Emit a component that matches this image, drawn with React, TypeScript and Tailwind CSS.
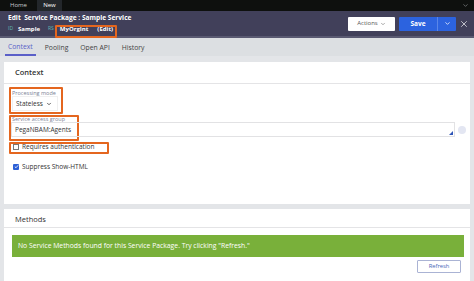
import { ChevronDown, X } from 'lucide-react';

const font = { fontFamily: '"Open Sans", "Liberation Sans", sans-serif' };

function OrangeBox({ className }: { className: string }) {
  return <div className={`absolute border-2 border-[#e4661f] rounded-[1px] pointer-events-none ${className}`} />;
}

export default function App() {
  return (
    <div style={font} className="w-[474px] h-[281px] overflow-hidden bg-[#e3e5e8] flex flex-col">
      {/* top tab strip */}
      <div className="h-[11px] bg-[#0e100e] flex items-stretch text-[6px] text-[#c9cacc] relative">
        <div className="w-[37px] flex items-center justify-center">Home</div>
        <div className="w-[25px] bg-[#23272b] flex items-center justify-center text-white">New</div>
        <ChevronDown className="absolute right-[5px] top-[2px] w-[7px] h-[7px] text-[#9a9ca0]" strokeWidth={2} />
      </div>

      {/* header */}
      <div className="h-[25px] bg-[#41405a] flex items-center justify-between pl-[8px] pr-[5px] relative">
        <div className="flex flex-col leading-none">
          <div className="text-white font-bold text-[6.6px]">Edit&nbsp; Service Package : Sample Service</div>
          <div className="flex items-center text-[6px] mt-[4px] font-bold">
            <span className="text-[#5fb6b0] font-normal text-[5px]">ID</span>
            <span className="text-white ml-[5px]">Sample</span>
            <span className="text-[#5fb6b0] font-normal text-[5px] ml-[8px]">RS</span>
            <span className="text-white ml-[6px]">MyOrgInt</span>
            <span className="text-white ml-[9px]">(Edit)</span>
          </div>
        </div>
        <OrangeBox className="left-[55px] top-[14px] w-[62px] h-[13px]" />
        <div className="flex items-center">
          <button className="h-[14px] w-[47px] bg-white rounded-[1px] flex items-center justify-center gap-[2px] text-[6px] text-[#555]">
            Actions <ChevronDown className="w-[6px] h-[6px]" strokeWidth={2} />
          </button>
          <div className="ml-[4px] h-[14px] flex bg-[#2c63df] rounded-[1px]">
            <div className="w-[38px] flex items-center justify-center text-white font-bold text-[6.5px]">Save</div>
            <div className="w-[19px] border-l border-[#5a86e8] flex items-center justify-center">
              <ChevronDown className="w-[7px] h-[7px] text-white" strokeWidth={2.5} />
            </div>
          </div>
          <X className="ml-[3px] w-[10px] h-[10px] text-[#d8d8de]" strokeWidth={2} />
        </div>
      </div>
      <div className="h-[2px] bg-[#5a5a72]" />

      {/* tabs */}
      <div className="h-[18px] bg-[#dcdfe2] flex items-stretch text-[6.8px] text-[#444] pl-[5px]">
        <div className="px-[3px] flex items-center text-[#5a5fc8] border-b-2 border-[#5a5fc8] pt-[2px]">Context</div>
        <div className="ml-[9px] flex items-center pt-[2px]">Pooling</div>
        <div className="ml-[12px] flex items-center pt-[2px]">Open API</div>
        <div className="ml-[12px] flex items-center pt-[2px]">History</div>
      </div>

      {/* body */}
      <div className="flex-1 pt-[6px] px-[4px] flex flex-col gap-[5px]">
        {/* context card */}
        <div className="bg-white h-[142px] flex flex-col">
          <div className="h-[22px] border-b border-[#e4e4e6] flex items-center pl-[11px] text-[7.5px] font-semibold text-[#333]">
            Context
          </div>
          <div className="relative flex-1 pl-[8px] pt-[5px] text-[#333]">
            <OrangeBox className="left-[5px] top-[3px] w-[54px] h-[27px]" />
            <OrangeBox className="left-[5px] top-[31px] w-[70px] h-[26px]" />
            <OrangeBox className="left-[5px] top-[58px] w-[100px] h-[12px]" />

            <div className="text-[5.5px] leading-[8px] text-[#7b7f95]">Processing mode</div>
            <div className="mt-[-1px] w-[46px] h-[15px] border border-[#f0f0f0] flex items-center pl-[3px] text-[6.5px] gap-[3px]">
              Stateless <ChevronDown className="w-[6px] h-[6px]" strokeWidth={3} />
            </div>

            <div className="mt-[4px] text-[5.5px] leading-[8px] text-[#7b7f95]">Service access group</div>
            <div className="flex items-center mt-[-1px]">
              <div className="relative w-[444px] -ml-[1px] h-[15px] border border-[#e2e2e4] flex items-center pl-[3px] text-[6.5px]">
                PegaNBAM:Agents
                <div className="absolute right-[1px] bottom-[1px] w-0 h-0 border-l-[4px] border-l-transparent border-b-[4px] border-b-[#2f55b8]" />
              </div>
              <div className="ml-[3px] w-[8px] h-[8px] rounded-full bg-[#e3e6f2]" />
            </div>

            <div className="mt-[5px] flex items-center gap-[3px] text-[6.5px]">
              <div className="w-[6px] h-[6px] border border-[#777] bg-white ml-[1px]" />
              Requires authentication
            </div>

            <div className="mt-[10px] flex items-center gap-[3px] text-[6.5px]">
              <div className="w-[6px] h-[6px] bg-[#2b5fd6] rounded-[1px] ml-[1px] flex items-center justify-center">
                <svg viewBox="0 0 6 6" className="w-[5px] h-[5px]">
                  <path d="M1 3.2 L2.4 4.5 L5 1.5" stroke="white" strokeWidth="1" fill="none" />
                </svg>
              </div>
              Suppress Show-HTML
            </div>
          </div>
        </div>

        {/* methods card */}
        <div className="bg-white flex-1 flex flex-col">
          <div className="h-[19px] border-b border-[#e4e4e6] flex items-center pl-[11px] pt-[3px] text-[7.5px] text-[#333]">
            Methods
          </div>
          <div className="ml-[8px] mr-[6px] mt-[7px] h-[22px] bg-[#79b03a] flex items-center pl-[6px] text-[6.8px] text-white">
            No Service Methods found for this Service Package. Try clicking "Refresh."
          </div>
          <div className="flex justify-end pr-[9px] mt-[3px]">
            <button className="w-[44px] h-[13px] border border-[#aab3d4] rounded-[1px] text-[5.8px] text-[#4865b8] bg-white">
              Refresh
            </button>
          </div>
        </div>
      </div>
    </div>
  );
}
